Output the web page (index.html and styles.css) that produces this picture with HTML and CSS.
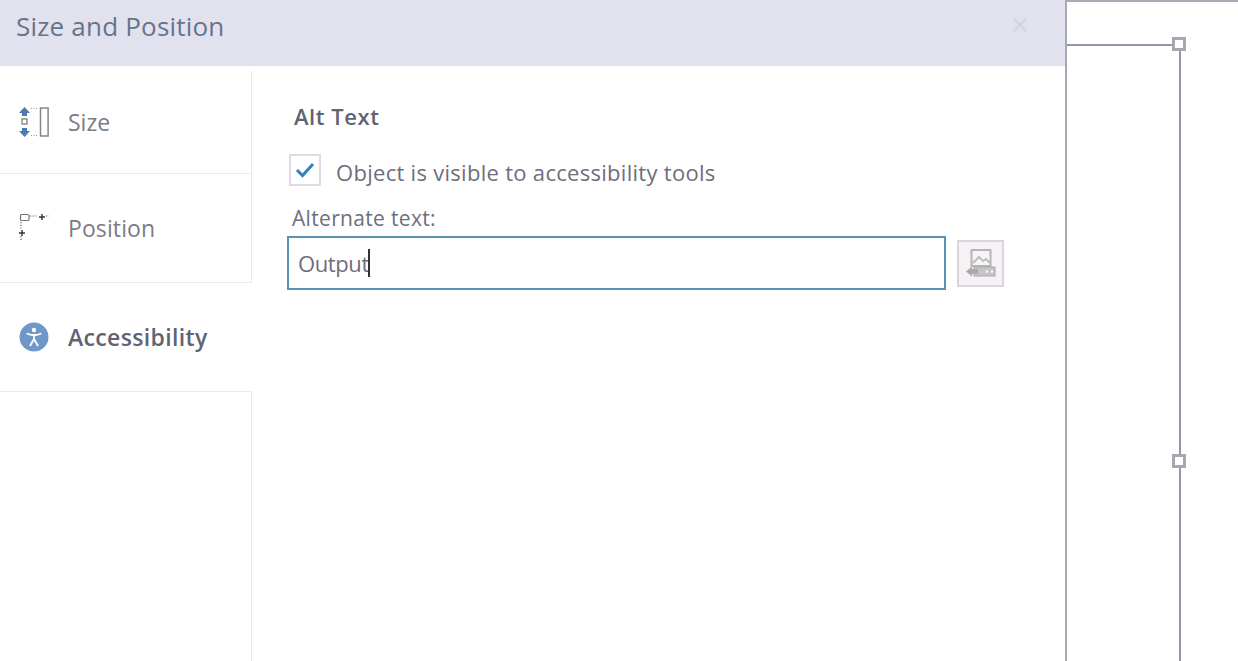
FILE: index.html
```html
<!DOCTYPE html>
<html lang="en">
<head>
<meta charset="utf-8">
<title>Size and Position</title>
<link rel="stylesheet" href="styles.css">
</head>
<body>
<div class="app">
  <section class="dialog">
    <header class="dialog-head">
      <h1 class="dialog-title">Size and Position</h1>
      <svg class="close" width="18" height="18" viewBox="0 0 18 18"><path d="M2.500 2.500l13 13M15.500 2.500l-13 13" stroke="#d5d5dd" stroke-width="2.400" fill="none"/></svg>
    </header>
    <div class="dialog-body">
      <nav class="tabs">
        <div class="tab tab-size">
          <svg class="tab-icon" width="30" height="32" viewBox="0 0 30 32">
            <path d="M5.500 1L0 7h3v3h5V7h3z M5.500 31L0 25h3v-3h5v3h3z" fill="#4a7cb0"/>
            <rect x="3" y="13" width="5" height="5" fill="#fff" stroke="#777" stroke-width="1.200"/>
            <path d="M12 2.500h7M12 29.500h7" stroke="#999" stroke-width="1" stroke-dasharray="1 1.500" fill="none"/>
            <rect x="21.500" y="2" width="7.600" height="28" fill="#fff" stroke="#85858c" stroke-width="1.500"/>
          </svg>
          <span class="tab-label tab-label-size">Size</span>
        </div>
        <div class="tab tab-position">
          <svg class="tab-icon" width="30" height="32" viewBox="0 0 30 32">
            <rect x="1.500" y="2.500" width="8.500" height="6" rx="1" fill="#fff" stroke="#777" stroke-width="1.200"/>
            <path d="M11 4h7M27 4h3M2 10v8M2 24v5" stroke="#666" stroke-width="1.200" stroke-dasharray="1.200 1.500" fill="none"/>
            <path d="M23 2v6M20 5h6M3 18v6M0 21h6" stroke="#333" stroke-width="1.400" fill="none"/>
          </svg>
          <span class="tab-label tab-label-position">Position</span>
        </div>
        <div class="tab tab-active">
          <svg class="tab-icon" width="30" height="30" viewBox="0 0 30 30">
            <circle cx="15" cy="15" r="14.500" fill="#6f98c8"/>
            <circle cx="15" cy="8" r="2.200" fill="#fff"/>
            <path d="M7.500 11.500l5.500 1.500h4l5.500-1.500M15 13v5M15 17l-4 7M15 17l4 7" stroke="#fff" stroke-width="1.800" fill="none"/>
          </svg>
          <span class="tab-label tab-label-active">Accessibility</span>
        </div>
        <div class="tab-rest"></div>
      </nav>
      <main class="panel">
        <h2 class="panel-title">Alt Text</h2>
        <div class="check-row">
          <span class="checkbox">
            <svg width="22" height="18" viewBox="0 0 22 18"><path d="M3 9l5.500 5.500L19 3" stroke="#2f83c2" stroke-width="3" fill="none"/></svg>
          </span>
          <span class="check-label">Object is visible to accessibility tools</span>
        </div>
        <label class="field-label">Alternate text:</label>
        <div class="field-row">
          <div class="input"><span class="input-text">Output</span><span class="caret"></span></div>
          <button class="pic-btn" type="button">
            <svg width="30" height="36" viewBox="0 0 30 36">
              <rect x="5.500" y="5" width="19" height="16" fill="#f7f4f7" stroke="#b5b5b5" stroke-width="2"/>
              <path d="M7 18l6-6 4 4 3-2 4 4" stroke="#bdbdbd" stroke-width="2" fill="none"/>
              <rect x="8" y="22" width="21" height="9" fill="#c4c4c4" stroke="#a9a9a9"/>
              <path d="M0 26.500l6-5v2.500h6v5H6v2.500z" fill="#aaa"/>
              <path d="M20 26.500h2M25 26.500h2" stroke="#fff" stroke-width="2"/>
            </svg>
          </button>
        </div>
      </main>
    </div>
  </section>
  <section class="canvas">
    <div class="shape">
      <span class="handle handle-top"></span>
      <span class="handle handle-mid"></span>
    </div>
  </section>
</div>
</body>
</html>
```
FILE: styles.css
```css
* { box-sizing: border-box; }
html, body { margin: 0; padding: 0; height: 100%; overflow: hidden; background: #fff; }
body { font-family: "Open Sans", "Noto Sans", "Liberation Sans", sans-serif; color: #6a6a78; }
.app { display: flex; height: 661px; width: 1238px; }
.dialog { width: 1065px; flex: none; display: flex; flex-direction: column; }
.dialog-head { height: 66px; flex: none; background: #e2e2ef; display: flex; align-items: center; justify-content: space-between; padding: 0 36px 0 16px; }
.dialog-title { margin: 0 0 14px; font-size: 26px; font-weight: 400; letter-spacing: 0.2px; color: #66748a; }
.close { margin-bottom: 16px; }
.dialog-body { flex: 1; display: flex; padding-top: 5px; }
.tabs { width: 252px; flex: none; display: flex; flex-direction: column; }
.tab { display: flex; align-items: center; gap: 19px; padding-left: 19px; border-right: 1px solid #ebe7f3; border-bottom: 1px solid #ebe7f3; }
.tab-size { height: 103px; padding-bottom: 1px; }
.tab-position { height: 109px; }
.tab-active { height: 109px; border-right-color: transparent; }
.tab-rest { flex: 1; border-right: 1px solid #ebe7f3; }
.tab-icon { flex: none; }
.tab-label { font-size: 23px; color: #7b7b88; }
.tab-label-size { letter-spacing: 0; }
.tab-label-position { letter-spacing: 0.1px; }
.tab-label-active { font-weight: 600; letter-spacing: 0.35px; color: #5f6474; }
.panel { flex: 1; padding: 30px 0 0 35px; }
.panel-title { margin: 0 0 24px 7px; font-size: 22px; line-height: 30px; font-weight: 600; letter-spacing: 0.55px; color: #5f6474; }
.check-row { display: flex; align-items: center; gap: 15px; margin-left: 2px; height: 30px; }
.checkbox { width: 32px; height: 32px; flex: none; border: 2px solid #dddbe8; display: flex; align-items: center; justify-content: center; background: #fff; }
.check-label { font-size: 22px; letter-spacing: 0.29px; color: #6e6e7c; padding-top: 4px; }
.field-label { display: block; margin: 18px 0 3px 5px; font-size: 21px; line-height: 30px; letter-spacing: 0.33px; color: #6e6e7c; }
.field-row { display: flex; align-items: center; gap: 11px; }
.input { width: 659px; height: 54px; border: 2px solid #5a93b5; display: flex; align-items: center; padding: 0 0 0 9px; background: #fff; }
.input-text { font-size: 22px; letter-spacing: -0.4px; color: #6e6e7c; }
.caret { width: 2px; height: 28px; background: #333; margin-left: -1px; }
.pic-btn { width: 47px; height: 47px; padding: 0; margin: 0; border: 2px solid #d9d5dc; background: #f5f1f5; display: flex; align-items: center; justify-content: center; }
.canvas { flex: 1; border-left: 2px solid #a9a9b5; border-top: 2px solid #a9a9b5; position: relative; }
.shape { margin-top: 42px; width: 114px; height: 617px; border-top: 2px solid #8f98a8; border-right: 2px solid #8f98a8; position: relative; }
.handle { position: absolute; width: 14px; height: 14px; background: #fff; border: 3px solid #aaa6ae; right: -7px; }
.handle-top { top: -9px; }
.handle-mid { top: 408px; }
```
